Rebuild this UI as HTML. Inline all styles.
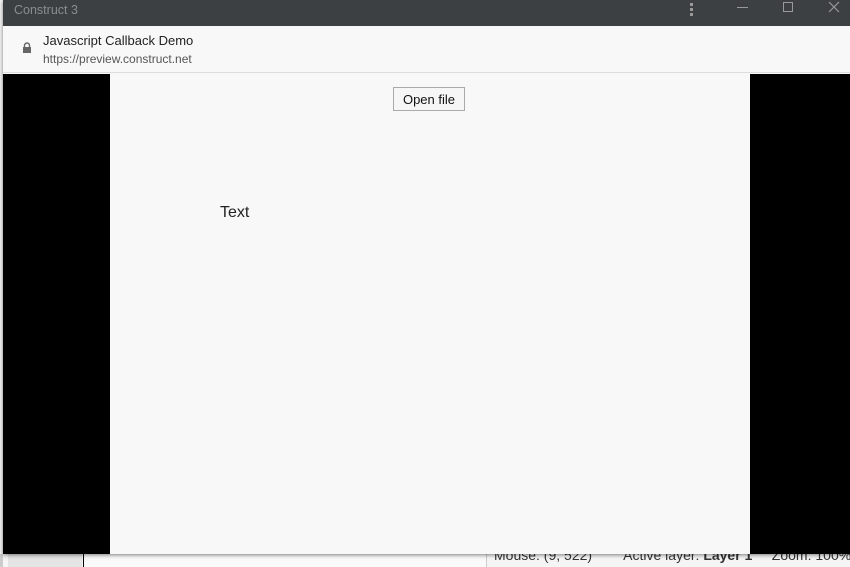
<!DOCTYPE html>
<html><head><style>
*{margin:0;padding:0;box-sizing:border-box}
body{width:850px;height:567px;overflow:hidden;background:#f5f5f5;position:relative;font-family:"Liberation Sans",sans-serif}
.abs{position:absolute}
</style></head><body>
<div class="abs" style="left:0;top:554px;width:3px;height:13px;background:#ccc"></div>
<div class="abs" style="left:8px;top:554px;width:74px;height:13px;background:#e4e4e4"></div>
<div class="abs" style="left:83px;top:554px;width:1px;height:13px;background:#000"></div>
<div class="abs" style="left:84px;top:554px;width:402px;height:13px;background:#fafafa"></div>
<div class="abs" style="left:486px;top:554px;width:1px;height:13px;background:#ccc"></div>
<div class="abs" style="left:494px;top:547px;font-size:14px;color:#333;white-space:nowrap">Mouse: (9, 522)&nbsp;&nbsp;&nbsp;&nbsp;&nbsp;&nbsp;&nbsp;&nbsp;Active layer: <b>Layer 1</b>&nbsp;&nbsp;&nbsp;&nbsp;&nbsp;Zoom: 100%</div>
<div class="abs" style="left:3px;top:0;width:847px;height:554px;box-shadow:0 1px 4px rgba(0,0,0,.5);background:#f8f8f8">
<div class="abs" style="left:0;top:0;width:847px;height:26px;background:#3c4043"></div>
<div class="abs" style="left:11px;top:3px;font-size:12.5px;color:#8a8d90">Construct 3</div>
<div class="abs" style="left:687px;top:3px;width:3px;height:3px;background:#999;box-shadow:0 5px 0 #999,0 10px 0 #999"></div>
<div class="abs" style="left:734px;top:7px;width:11px;height:1px;background:#999"></div>
<div class="abs" style="left:780px;top:2px;width:10px;height:10px;border:1px solid #999"></div>
<svg class="abs" style="left:825px;top:1px" width="12" height="12"><path d="M1 1L11 11M11 1L1 11" stroke="#999" stroke-width="1.2"/></svg>
<div class="abs" style="left:0;top:26px;width:847px;height:47px;background:#f8f8f8;border-bottom:1px solid #ddd"></div>
<svg class="abs" style="left:19px;top:42px" width="10" height="12"><path d="M2.5 5V3.5a2.5 2.5 0 0 1 5 0V5" stroke="#666" stroke-width="1.4" fill="none"/><rect x="1" y="5" width="8" height="6" fill="#666"/></svg>
<div class="abs" style="left:40px;top:33px;font-size:13px;color:#222">Javascript Callback Demo</div>
<div class="abs" style="left:40px;top:52px;font-size:12px;color:#555">https://preview.construct.net</div>
<div class="abs" style="left:0;top:74px;width:107px;height:480px;background:#000"></div>
<div class="abs" style="left:747px;top:74px;width:100px;height:480px;background:#000"></div>
<div class="abs" style="left:390px;top:87px;width:72px;height:24px;border:1px solid #aaa;background:#f6f6f6;font-size:13px;color:#111;text-align:center;line-height:24px">Open file</div>
<div class="abs" style="left:217px;top:204px;font-size:16px;color:#222">Text</div>
</div>
</body></html>
